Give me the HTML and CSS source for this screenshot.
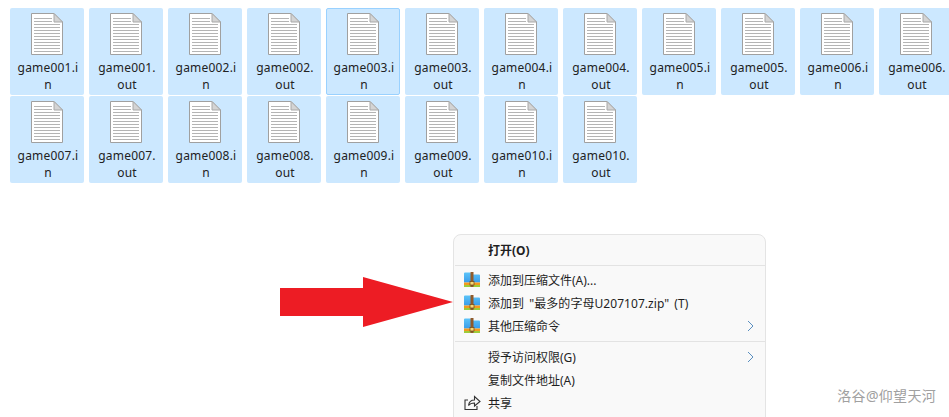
FILE: index.html
```html
<!DOCTYPE html>
<html lang="zh-CN">
    <head>
        <meta charset="utf-8" />
        <title>game files</title>
        <link rel="stylesheet" href="styles.css">
    </head>
    <body>
        <svg class="defs" width="0" height="0">
            <symbol id="doc" viewBox="0 0 32 42">
                <path d="M.5.5H23L31.5 9V41.500H.5Z" fill="#fff" stroke="#a0a0a0"/>
                <path d="M23 .5V9H31.500Z" fill="#d4d4d4" stroke="#a8a8a8"/>
                <path d="M3 5.500H21M3 8.500H21M3 11.500H29M3 14.500H29M3 17.500H29M3 20.500H29M3 23.500H29M3 26.500H29M3 29.500H29M3 32.500H29M3 35.500H29M3 38.500H29" stroke="#b4b4b4"/>
            </symbol>
            <symbol id="rar" viewBox="0 0 16 15">
                <defs>
                    <linearGradient id="sky" x1="0" y1="0" x2="0" y2="1">
                        <stop offset="0" stop-color="#5cc4f8"/>
                        <stop offset="1" stop-color="#3a9cea"/>
                    </linearGradient>
                </defs>
                <path d="M0 1.500a1 1 0 0 1 1-1H6L8 2.500H15a1 1 0 0 1 1 1V10.500H0Z" fill="url(#sky)"/>
                <rect y="10.500" width="16" height="2.500" fill="#f39a1e"/>
                <rect y="13" width="16" height="2" fill="#9ccb3b"/>
                <rect x="6.500" y="0" width="3" height="15" fill="#8f5a2b"/>
                <rect x="6" y="9.500" width="4" height="3.500" fill="#f7d774" stroke="#6e4316" stroke-width=".7"/>
            </symbol>
            <symbol id="chev" viewBox="0 0 7 12">
                <path d="M1 1 6 6 1 11" fill="none" stroke="#5a8fc0" stroke-width="1"/>
            </symbol>
        </svg>

        <div class="files">
            <div class="tile"><svg class="doc"><use href="#doc"/></svg><span>game001.in</span></div>
            <div class="tile"><svg class="doc"><use href="#doc"/></svg><span>game001.out</span></div>
            <div class="tile"><svg class="doc"><use href="#doc"/></svg><span>game002.in</span></div>
            <div class="tile"><svg class="doc"><use href="#doc"/></svg><span>game002.out</span></div>
            <div class="tile focus"><svg class="doc"><use href="#doc"/></svg><span>game003.in</span></div>
            <div class="tile"><svg class="doc"><use href="#doc"/></svg><span>game003.out</span></div>
            <div class="tile"><svg class="doc"><use href="#doc"/></svg><span>game004.in</span></div>
            <div class="tile"><svg class="doc"><use href="#doc"/></svg><span>game004.out</span></div>
            <div class="tile"><svg class="doc"><use href="#doc"/></svg><span>game005.in</span></div>
            <div class="tile"><svg class="doc"><use href="#doc"/></svg><span>game005.out</span></div>
            <div class="tile"><svg class="doc"><use href="#doc"/></svg><span>game006.in</span></div>
            <div class="tile"><svg class="doc"><use href="#doc"/></svg><span>game006.out</span></div>
            <div class="tile"><svg class="doc"><use href="#doc"/></svg><span>game007.in</span></div>
            <div class="tile"><svg class="doc"><use href="#doc"/></svg><span>game007.out</span></div>
            <div class="tile"><svg class="doc"><use href="#doc"/></svg><span>game008.in</span></div>
            <div class="tile"><svg class="doc"><use href="#doc"/></svg><span>game008.out</span></div>
            <div class="tile"><svg class="doc"><use href="#doc"/></svg><span>game009.in</span></div>
            <div class="tile"><svg class="doc"><use href="#doc"/></svg><span>game009.out</span></div>
            <div class="tile"><svg class="doc"><use href="#doc"/></svg><span>game010.in</span></div>
            <div class="tile"><svg class="doc"><use href="#doc"/></svg><span>game010.out</span></div>
        </div>

        <svg class="arrow" viewBox="0 0 173 50">
            <path d="M0 11H83V0L173 25 83 50V39H0Z" fill="#ed1c24"/>
        </svg>

        <div class="menu">
            <div class="item bold"><span class="slot"></span>打开(O)</div>
            <div class="sep first"></div>
            <div class="item"><span class="slot"><svg class="rar"><use href="#rar"/></svg></span>添加到压缩文件(A)...</div>
            <div class="item wide"><span class="slot"><svg class="rar"><use href="#rar"/></svg></span>添加到 "最多的字母U207107.zip" (T)</div>
            <div class="item"><span class="slot"><svg class="rar"><use href="#rar"/></svg></span>其他压缩命令<svg class="chev"><use href="#chev"/></svg></div>
            <div class="sep"></div>
            <div class="item"><span class="slot"></span>授予访问权限(G)<svg class="chev"><use href="#chev"/></svg></div>
            <div class="item"><span class="slot"></span>复制文件地址(A)</div>
            <div class="item">
                <span class="slot">
                    <svg class="share" viewBox="0 0 17 15">
                        <path d="M4 5H1V14.500H13V11" fill="none" stroke="#333" stroke-width="1.100"/>
                        <path d="M4.500 10.500C5 7 7.500 5 10.500 5V1.500L16 6.500 10.500 11V8C8 8 6 8.500 4.500 10.500Z" fill="none" stroke="#333" stroke-width="1.100"/>
                    </svg>
                </span>共享
            </div>
        </div>

        <div class="mark">洛谷@仰望天河</div>
    </body>
</html>
```

FILE: styles.css
```css
* {
    margin: 0;
    padding: 0;
    box-sizing: border-box;
}
html, body {
    height: 100%;
    overflow: hidden;
}
body {
    position: relative;
    background-color: #fff;
    color: #222;
    font-family: "Noto Sans", "Noto Sans CJK SC", sans-serif;
}
.defs {
    position: absolute;
}

/* file tiles */
.files {
    display: grid;
    grid-template-columns: repeat(12, 74px);
    grid-auto-rows: 87px;
    gap: 1px 5px;
    padding: 8px 0 0 10px;
}
.tile {
    display: flex;
    flex-direction: column;
    align-items: center;
    padding: 5px 5px 0 7px;
    background-color: #cce8ff;
    border-radius: 2px;
    font-size: 12px;
    line-height: 17px;
    letter-spacing: .2px;
    text-align: center;
    word-break: break-all;
}
.tile.focus {
    border: 1px solid #99d1ff;
    padding: 4px 4px 0 6px;
}
.tile span {
    width: 100%;
    margin-top: 4px;
}
.doc {
    flex: none;
    width: 32px;
    height: 42px;
    margin-left: -2px;
}

/* overlays */
.arrow {
    position: absolute;
    left: 280px;
    top: 277px;
    width: 173px;
    height: 50px;
}
.menu {
    position: absolute;
    left: 453px;
    top: 234px;
    width: 313px;
    height: 200px;
    padding-top: 3px;
    background-color: #f9f9f9;
    border: 1px solid #e4e4e4;
    border-radius: 8px;
    font-size: 12px;
    color: #1f1f1f;
}
.item {
    display: flex;
    align-items: center;
    height: 23px;
    padding-left: 10px;
}
.wide {
    word-spacing: 2px;
    letter-spacing: .05px;
}
.bold {
    font-weight: 700;
}
.slot {
    display: flex;
    align-items: center;
    flex: none;
    width: 24px;
    height: 16px;
}
.rar {
    width: 16px;
    height: 15px;
}
.share {
    width: 17px;
    height: 15px;
}
.chev {
    width: 7px;
    height: 12px;
    margin-left: auto;
    margin-right: 11px;
}
.sep {
    height: 1px;
    margin: 4px 0 3px 1px;
    background-color: #e3e3e3;
}
.sep.first {
    margin-bottom: 2px;
}
.mark {
    position: absolute;
    right: 13px;
    bottom: 12px;
    font-size: 14px;
    color: #a0a0a0;
    letter-spacing: .3px;
}
```
